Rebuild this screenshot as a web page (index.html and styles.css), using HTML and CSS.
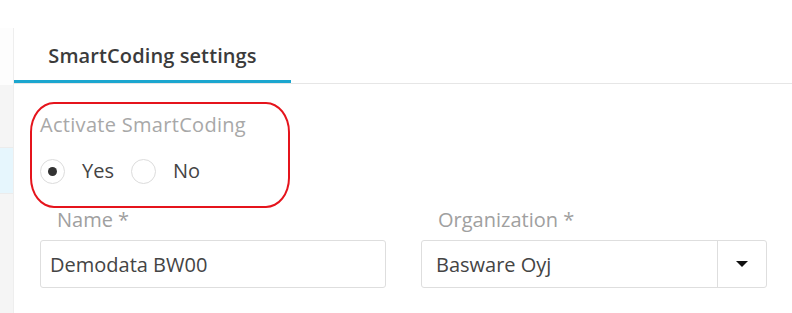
FILE: index.html
```html
<!DOCTYPE html>
<html lang="en">
<head>
    <meta charset="UTF-8">
    <title>SmartCoding settings</title>
    <link rel="stylesheet" href="styles.css">
</head>
<body>
    <div class="page">
        <aside class="side">
            <div class="side-top"></div>
            <div class="side-item"></div>
            <div class="side-item active"></div>
            <div class="side-rest"></div>
        </aside>

        <main class="main">
            <div class="tabs">
                <div class="tab selected">SmartCoding settings</div>
            </div>

            <div class="activate">
                <div class="group-label">Activate SmartCoding</div>
                <div class="radios">
                    <label class="radio">
                        <span class="circle checked"></span>
                        <span>Yes</span>
                    </label>
                    <label class="radio">
                        <span class="circle"></span>
                        <span>No</span>
                    </label>
                </div>
            </div>

            <div class="form-row">
                <div class="field">
                    <div class="field-label">Name *</div>
                    <div class="input">Demodata BW00</div>
                </div>
                <div class="field">
                    <div class="field-label">Organization *</div>
                    <div class="select">
                        <span class="select-value">Basware Oyj</span>
                        <span class="select-btn"><span class="caret"></span></span>
                    </div>
                </div>
            </div>
        </main>
    </div>
</body>
</html>
```

FILE: styles.css
```css
html, body {
    margin: 0;
    height: 100%;
    background-color: #fff;
}
body {
    font-family: "Open Sans", "Noto Sans", sans-serif;
    color: #444;
}
.page {
    display: flex;
    height: 313px;
    overflow: hidden;
}
.side {
    width: 13px;
    margin-top: 28px;
    border-right: 1px solid #eeeeee;
    display: flex;
    flex-direction: column;
}
.side-top {
    height: 57px;
    background-color: #fdfdfd;
}
.side-item {
    height: 62px;
    background-color: #f5f5f5;
    border-bottom: 1px solid #ececec;
}
.side-item.active {
    height: 45px;
    background-color: #e6f6fd;
}
.side-rest {
    flex: 1;
    background-color: #f5f5f5;
}
.main {
    flex: 1;
}
.tabs {
    margin-top: 28px;
    display: flex;
    border-bottom: 1px solid #e6e6e6;
}
.tab {
    width: 277px;
    box-sizing: border-box;
    padding-top: 14px;
    text-align: center;
    font-size: 20px;
    font-weight: 600;
    color: #3b3b3b;
    letter-spacing: 0.1px;
}
.tab.selected {
    border-bottom: 3px solid #1ba6cf;
    height: 55px;
}
.activate {
    margin: 18px 0 0 16px;
    width: 260px;
    height: 106px;
    box-sizing: border-box;
    border: 2px solid #e5141c;
    border-radius: 24px / 30px;
    padding: 8px 0 0 8px;
}
.group-label {
    font-size: 20px;
    color: #a8a8a8;
    line-height: 26px;
    letter-spacing: 0.3px;
}
.radios {
    display: flex;
    gap: 17px;
    margin-top: 20px;
}
.radio {
    display: flex;
    align-items: center;
    gap: 17px;
    font-size: 20px;
    line-height: 26px;
    color: #444;
}
.circle {
    width: 25px;
    height: 25px;
    box-sizing: border-box;
    border: 1px solid #dcdcdc;
    border-radius: 50%;
    display: flex;
    align-items: center;
    justify-content: center;
}
.circle.checked::after {
    content: "";
    width: 9px;
    height: 9px;
    border-radius: 50%;
    background-color: #333;
}
.form-row {
    display: flex;
    gap: 35px;
    margin: -1px 0 0 26px;
}
.field {
    width: 346px;
}
.field-label {
    font-size: 20px;
    color: #a0a0a0;
    padding-left: 17px;
    line-height: 26px;
}
.input, .select {
    margin-top: 7px;
    height: 48px;
    box-sizing: border-box;
    border: 1px solid #dedede;
    border-radius: 3px;
    font-size: 20px;
    color: #444;
    display: flex;
    align-items: center;
}
.input {
    padding-left: 9px;
}
.select-value {
    flex: 1;
    padding-left: 14px;
}
.select-btn {
    width: 48px;
    height: 100%;
    border-left: 1px solid #dedede;
    display: flex;
    align-items: center;
    justify-content: center;
}
.caret {
    width: 0;
    height: 0;
    border-left: 6px solid transparent;
    border-right: 6px solid transparent;
    border-top: 6px solid #111;
}
```
